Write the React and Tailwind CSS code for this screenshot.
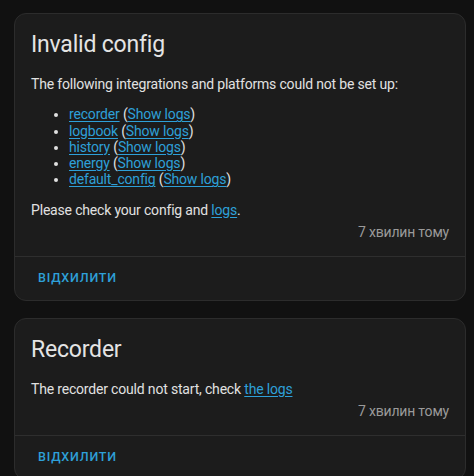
const LINK = "text-[#2ea0d8] underline underline-offset-2"

const integrations = ["recorder", "logbook", "history", "energy", "default_config"]

const Card = ({ title, children }) => (
  <div className="shrink-0 rounded-xl border border-[#2c2c2c] bg-[#1c1c1c]">
    <div className="px-4 pt-[15px] pb-4">
      <h1 className="text-[23px] leading-8 tracking-[-0.2px] text-[#e4e4e4]">{title}</h1>
      <div className="mt-[15px] text-sm leading-[16.25px] tracking-[-0.18px] text-[#e1e1e1]">{children}</div>
      <div className="mt-[6px] text-right text-sm leading-4 tracking-[-0.2px] text-[#9a9a9a]">7 хвилин тому</div>
    </div>
    <div className="flex h-[44px] items-center border-t border-[#2e2e2e] pl-[23px]">
      <button className="text-[12.5px] font-medium uppercase tracking-[0.8px] text-[#2ea0d8]">
        Відхилити
      </button>
    </div>
  </div>
)

export default function App() {
  return (
    <div
      className="flex h-screen flex-col gap-[17px] overflow-hidden bg-[#111111] pl-[14px] pr-2 pt-[13px]"
      style={{ fontFamily: "Roboto, 'Noto Sans', sans-serif" }}
    >
      <Card title="Invalid config">
        <p>The following integrations and platforms could not be set up:</p>
        <ul className="mt-[14px] list-disc pl-[38px]">
          {integrations.map((name) => (
            <li key={name}>
              <a href="#" className={LINK}>{name}</a> (
              <a href="#" className={LINK}>Show logs</a>)
            </li>
          ))}
        </ul>
        <p className="mt-[14px]">
          Please check your config and <a href="#" className={LINK}>logs</a>.
        </p>
      </Card>
      <Card title="Recorder">
        <p>
          The recorder could not start, check <a href="#" className={LINK}>the logs</a>
        </p>
      </Card>
    </div>
  )
}
